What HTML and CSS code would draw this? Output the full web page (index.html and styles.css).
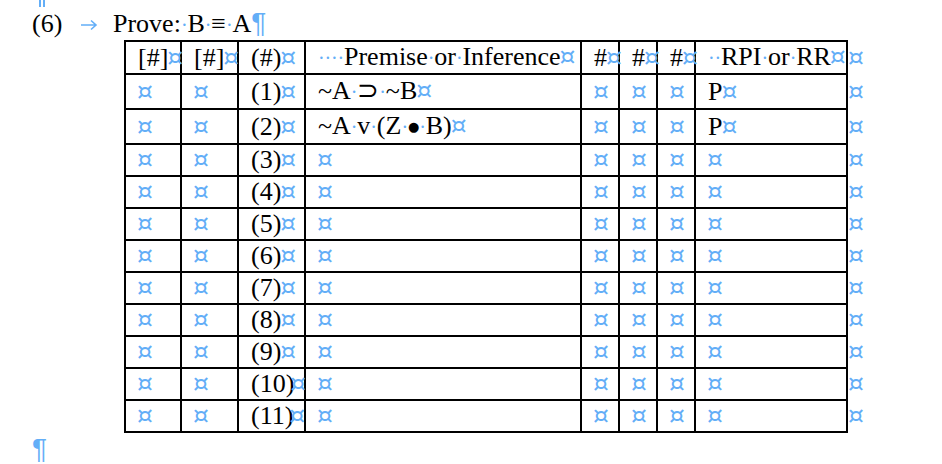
FILE: index.html
```html
<!DOCTYPE html>
<html>
<head>
<meta charset="utf-8">
<link rel="stylesheet" href="styles.css">
</head>
<body>
<div class="prev-mark"><span></span><span></span></div>
<p class="prove"><span class="num">(6)</span><span class="tab"><svg width="18" height="12" viewBox="0 0 18 12"><path d="M1 6H16M11 1.5L16 6L11 10.5" fill="none" stroke="#63aef7" stroke-width="1.6"/></svg></span>Prove:<span class="s">·</span>B<span class="s">·</span>≡<span class="s">·</span>A<span class="pil">¶</span></p>
<table class="proof">
<colgroup>
<col class="c1"><col class="c2"><col class="c3"><col class="c4"><col class="c5"><col class="c6"><col class="c7"><col class="c8"><col class="c9">
</colgroup>
<tr class="head">
<td>[#]<span class="cm">¤</span></td><td>[#]<span class="cm">¤</span></td><td>(#)<span class="cm">¤</span></td>
<td><span class="s">·</span><span class="s">·</span><span class="s">·</span><span class="s">·</span>Premise<span class="s">·</span>or<span class="s">·</span>Inference<span class="cm">¤</span></td>
<td>#<span class="cm">¤</span></td><td>#<span class="cm">¤</span></td><td>#<span class="cm">¤</span></td>
<td><span class="s">·</span><span class="s">·</span>RPI<span class="s">·</span>or<span class="s">·</span>RR<span class="cm">¤</span></td><td class="end"><span class="cm">¤</span></td>
</tr>
<tr class="tall">
<td><span class="cm">¤</span></td><td><span class="cm">¤</span></td><td>(1)<span class="cm">¤</span></td>
<td>~A<span class="s">·</span>⊃<span class="s">·</span>~B<span class="cm">¤</span></td>
<td><span class="cm">¤</span></td><td><span class="cm">¤</span></td><td><span class="cm">¤</span></td>
<td>P<span class="cm">¤</span></td><td class="end"><span class="cm">¤</span></td>
</tr>
<tr class="tall">
<td><span class="cm">¤</span></td><td><span class="cm">¤</span></td><td>(2)<span class="cm">¤</span></td>
<td>~A<span class="s">·</span>v<span class="s">·</span>(Z<span class="s">·</span><span class="dot">●</span><span class="s">·</span>B)<span class="cm">¤</span></td>
<td><span class="cm">¤</span></td><td><span class="cm">¤</span></td><td><span class="cm">¤</span></td>
<td>P<span class="cm">¤</span></td><td class="end"><span class="cm">¤</span></td>
</tr>
<tr><td><span class="cm">¤</span></td><td><span class="cm">¤</span></td><td>(3)<span class="cm">¤</span></td><td><span class="cm">¤</span></td><td><span class="cm">¤</span></td><td><span class="cm">¤</span></td><td><span class="cm">¤</span></td><td><span class="cm">¤</span></td><td class="end"><span class="cm">¤</span></td></tr>
<tr><td><span class="cm">¤</span></td><td><span class="cm">¤</span></td><td>(4)<span class="cm">¤</span></td><td><span class="cm">¤</span></td><td><span class="cm">¤</span></td><td><span class="cm">¤</span></td><td><span class="cm">¤</span></td><td><span class="cm">¤</span></td><td class="end"><span class="cm">¤</span></td></tr>
<tr><td><span class="cm">¤</span></td><td><span class="cm">¤</span></td><td>(5)<span class="cm">¤</span></td><td><span class="cm">¤</span></td><td><span class="cm">¤</span></td><td><span class="cm">¤</span></td><td><span class="cm">¤</span></td><td><span class="cm">¤</span></td><td class="end"><span class="cm">¤</span></td></tr>
<tr><td><span class="cm">¤</span></td><td><span class="cm">¤</span></td><td>(6)<span class="cm">¤</span></td><td><span class="cm">¤</span></td><td><span class="cm">¤</span></td><td><span class="cm">¤</span></td><td><span class="cm">¤</span></td><td><span class="cm">¤</span></td><td class="end"><span class="cm">¤</span></td></tr>
<tr><td><span class="cm">¤</span></td><td><span class="cm">¤</span></td><td>(7)<span class="cm">¤</span></td><td><span class="cm">¤</span></td><td><span class="cm">¤</span></td><td><span class="cm">¤</span></td><td><span class="cm">¤</span></td><td><span class="cm">¤</span></td><td class="end"><span class="cm">¤</span></td></tr>
<tr><td><span class="cm">¤</span></td><td><span class="cm">¤</span></td><td>(8)<span class="cm">¤</span></td><td><span class="cm">¤</span></td><td><span class="cm">¤</span></td><td><span class="cm">¤</span></td><td><span class="cm">¤</span></td><td><span class="cm">¤</span></td><td class="end"><span class="cm">¤</span></td></tr>
<tr><td><span class="cm">¤</span></td><td><span class="cm">¤</span></td><td>(9)<span class="cm">¤</span></td><td><span class="cm">¤</span></td><td><span class="cm">¤</span></td><td><span class="cm">¤</span></td><td><span class="cm">¤</span></td><td><span class="cm">¤</span></td><td class="end"><span class="cm">¤</span></td></tr>
<tr><td><span class="cm">¤</span></td><td><span class="cm">¤</span></td><td>(10)<span class="cm ov">¤</span></td><td><span class="cm">¤</span></td><td><span class="cm">¤</span></td><td><span class="cm">¤</span></td><td><span class="cm">¤</span></td><td><span class="cm">¤</span></td><td class="end"><span class="cm">¤</span></td></tr>
<tr><td><span class="cm">¤</span></td><td><span class="cm">¤</span></td><td>(11)<span class="cm ov">¤</span></td><td><span class="cm">¤</span></td><td><span class="cm">¤</span></td><td><span class="cm">¤</span></td><td><span class="cm">¤</span></td><td><span class="cm">¤</span></td><td class="end"><span class="cm">¤</span></td></tr>
</table>
<p class="last"><span class="pil">¶</span></p>
</body>
</html>
```
FILE: styles.css
```css
html, body {
  margin: 0;
  padding: 0;
  background: #ffffff;
}
body {
  width: 942px;
  height: 464px;
  overflow: hidden;
  font-family: "Liberation Serif", "Times New Roman", serif;
  font-size: 26px;
  color: #000000;
}
.s {
  display: inline-block;
  width: 6.5px;
  text-align: center;
  color: #63aef7;
  font-size: 20px;
}
.cm {
  color: #63aef7;
  font-family: "DejaVu Sans", sans-serif;
  font-size: 25px;
  line-height: 0;
  margin-left: -1px;
  margin-right: -4px;
}
.cm.ov {
  margin-left: -4px;
}
.pil {
  color: #63aef7;
  font-family: "Liberation Sans", Arial, sans-serif;
  font-size: 28px;
  line-height: 0;
}
.prev-mark {
  display: flex;
  gap: 2px;
  height: 8px;
  padding-left: 39px;
}
.prev-mark span {
  display: block;
  width: 2px;
  height: 7px;
  background: #63aef7;
}
.prove {
  margin: 0;
  height: 32px;
  line-height: 32px;
  padding-left: 32px;
  white-space: nowrap;
}
.num {
  display: inline-block;
  width: 48px;
}
.tab {
  display: inline-block;
  width: 33px;
}
.tab svg {
  vertical-align: 1px;
}
.proof {
  margin-left: 124px;
  border-collapse: collapse;
  table-layout: fixed;
  width: 744px;
}
.c1 { width: 56px; }
.c2 { width: 57px; }
.c3 { width: 67px; }
.c4 { width: 276px; }
.c5 { width: 38px; }
.c6 { width: 38px; }
.c7 { width: 38px; }
.c8 { width: 152px; }
.c9 { width: 20px; }
.proof td {
  border: 2px solid #000000;
  padding: 0 0 0 12px;
  line-height: 30px;
  height: 30px;
  white-space: nowrap;
  overflow: visible;
  vertical-align: middle;
}
.proof tr.tall td {
  line-height: 32px;
  height: 32px;
}
.proof td.end {
  border: none;
  padding-left: 1px;
}
.dot {
  font-family: "DejaVu Sans", sans-serif;
  font-size: 13px;
  line-height: 0;
  vertical-align: 3px;
}
.last {
  margin: 0;
  padding-left: 32px;
  line-height: 34px;
}
```
